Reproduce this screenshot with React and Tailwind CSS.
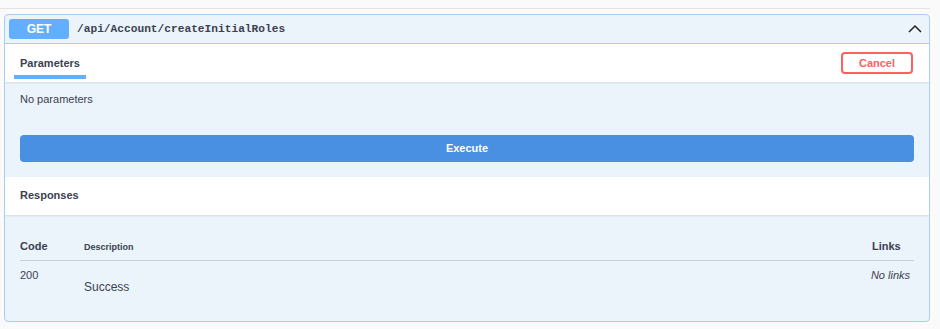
export default function App() {
  return (
    <div className="w-[940px] h-[329px] bg-[#fafafa] overflow-hidden" style={{ fontFamily: '"Liberation Sans", Arial, sans-serif' }}>
      <div className="w-[930px] pt-[8px]">
        <div className="h-[1px] bg-[#e3e3e3]" />
      </div>

      {/* OPERATION BLOCK */}
      <div className="ml-[4px] mt-[5px] w-[926px] h-[308px] bg-[#ebf3fb] border border-[#a9cdf5] rounded-[4px] overflow-hidden text-[#3b4151]">
        {/* summary */}
        <div className="h-[29px] flex items-center pl-[4px] pr-[6px] border-b border-[#a9cdf5]">
          <span className="w-[60px] h-[20px] rounded-[3px] bg-[#61affe] text-white text-[12px] font-bold flex items-center justify-center">GET</span>
          <span className="ml-[8px] text-[11.2px] font-bold text-[#3b4151]" style={{ fontFamily: '"Liberation Mono", monospace' }}>/api/Account/createInitialRoles</span>
          <svg className="ml-auto" width="16" height="16" viewBox="0 0 16 16" fill="none" stroke="#222" strokeWidth="1.5">
            <path d="M2 11 L8 5 L14 11" />
          </svg>
        </div>

        {/* parameters header */}
        <div className="h-[38px] bg-white flex items-center pl-[9px] pr-[16px] shadow-[0_1px_2px_rgba(0,0,0,0.1)]">
          <div className="relative h-full flex items-center px-[6px]">
            <span className="text-[11px] font-bold text-[#3b4151]">Parameters</span>
            <div className="absolute left-0 right-0 bottom-[3px] h-[4px] bg-[#61affe]" />
          </div>
          <button className="ml-auto w-[72px] h-[22px] border-2 border-[#ff6060] rounded-[4px] text-[#ff6060] text-[11px] font-bold flex items-center justify-center">Cancel</button>
        </div>

        {/* params body */}
        <div className="px-[15px] pt-[9px] text-[11px] text-[#3b4151]">No parameters</div>
        <div className="px-[15px] pt-[27px]">
          <button className="w-full h-[27px] bg-[#4990e2] rounded-[4px] text-white text-[11px] font-bold flex items-center justify-center">Execute</button>
        </div>

        {/* responses header */}
        <div className="mt-[15px] h-[38px] bg-white flex items-center px-[15px] shadow-[0_1px_2px_rgba(0,0,0,0.1)]">
          <span className="text-[11px] font-bold text-[#3b4151]">Responses</span>
        </div>

        {/* responses table */}
        <div className="px-[15px] pt-[23px]">
          <div className="flex items-end pb-[6px] border-b border-[#c9cfd6]">
            <span className="w-[64px] text-[11px] font-bold">Code</span>
            <span className="text-[9px] font-bold">Description</span>
            <span className="ml-auto w-[42px] text-[11px] font-bold">Links</span>
          </div>
          <div className="flex pt-[6px]">
            <span className="w-[64px] text-[11px]">200</span>
            <span className="pt-[11px] text-[12px]">Success</span>
            <span className="ml-auto pr-[4px] text-[11px] italic">No links</span>
          </div>
        </div>
      </div>
    </div>
  );
}
